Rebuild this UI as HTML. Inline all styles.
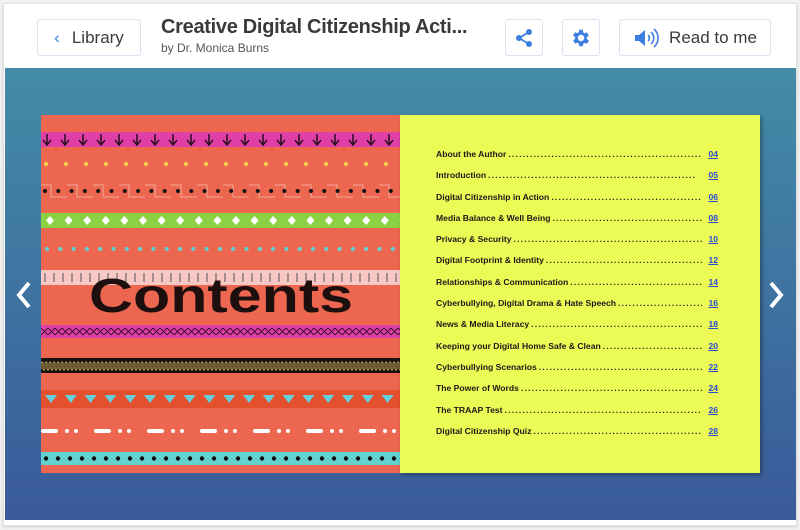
<!DOCTYPE html>
<html><head><meta charset="utf-8"><style>
*{margin:0;padding:0;box-sizing:border-box}
body{width:800px;height:530px;background:#f2f2f2;font-family:"Liberation Sans",sans-serif;position:relative;overflow:hidden}
.card{position:absolute;left:3px;top:3px;width:794px;height:523px;background:#fff;border:1px solid #e2e2e2;box-shadow:0 1px 3px rgba(0,0,0,.15)}
.btn{position:absolute;top:19px;height:37px;border:1px solid #d9e3ef;border-radius:3px;background:#fff;display:flex;align-items:center;justify-content:center;color:#3a3a3a;font-size:17px}
.title{position:absolute;left:161px;top:16px;font-size:20px;font-weight:bold;color:#3a3a3a;letter-spacing:-0.3px}
.sub{position:absolute;left:161px;top:41px;font-size:12px;color:#555}
.stage{position:absolute;left:5px;top:68px;width:791px;height:452px;background:linear-gradient(#438ca7,#3a5a9a)}
.lp{position:absolute;left:41px;top:115px;width:359px;height:358px;background:#ed6750}
.rp{position:absolute;left:400px;top:115px;width:360px;height:358px;background:#ebfa54;box-shadow:2px 2px 4px rgba(0,0,0,.35)}
.toc{position:absolute;left:36px;top:34px;width:282px;font-size:8.6px;font-weight:bold;color:#1a1a1a}
.toc div{display:flex;height:21.3px;align-items:flex-start;white-space:nowrap;overflow:hidden}
.toc span.d{flex:1;overflow:hidden;letter-spacing:1.2px;padding-left:2px}
.toc u{color:#2a4ad8;margin-left:4px;width:12px;display:inline-block;text-align:right;flex:none}
.arr{position:absolute}
</style></head><body>
<div class="card"></div>
<div class="btn" style="left:37px;width:104px"><span style="color:#3d7fe0;font-size:17px;margin-right:12px">&#8249;</span>Library</div>
<div class="title">Creative Digital Citizenship Acti...</div>
<div class="sub">by Dr. Monica Burns</div>
<div class="btn" style="left:505px;width:38px"><svg width="18" height="20" viewBox="0 0 18 20"><circle cx="14" cy="4" r="3" fill="#3d7fe0"/><circle cx="4" cy="10" r="3" fill="#3d7fe0"/><circle cx="14" cy="16" r="3" fill="#3d7fe0"/><path d="M14 4L4 10L14 16" stroke="#3d7fe0" stroke-width="1.8" fill="none"/></svg></div>
<div class="btn" style="left:562px;width:38px"><svg width="22" height="22" viewBox="0 0 24 24"><path fill="#3d7fe0" fill-rule="evenodd" d="M19.4 13a7.5 7.5 0 000-2l2.1-1.6-2-3.5-2.5 1a7 7 0 00-1.7-1L15 3h-4l-.4 2.7a7 7 0 00-1.7 1l-2.5-1-2 3.5L6.6 11a7.5 7.5 0 000 2l-2.1 1.6 2 3.5 2.5-1a7 7 0 001.7 1L11 21h4l.4-2.7a7 7 0 001.7-1l2.5 1 2-3.5zM13 15.5a3.5 3.5 0 110-7 3.5 3.5 0 010 7z" transform="translate(-1 0)"/></svg></div>
<div class="btn" style="left:619px;width:152px"><svg width="26" height="22" viewBox="0 0 26 22" style="margin-right:10px"><path d="M2 8h4l6-5v16l-6-5H2z" fill="#3d7fe0"/><path d="M15 8a4 4 0 010 6M18 5a8 8 0 010 12M21 2a12 12 0 010 18" stroke="#3d7fe0" stroke-width="1.6" fill="none"/></svg>Read to me</div>
<div class="stage"></div>
<div class="lp"><svg width="359" height="358" viewBox="0 0 359 358">
<defs>
<pattern id="ar" width="18" height="15" patternUnits="userSpaceOnUse"><path d="M6 2v11M2 8l4 5 4-5" stroke="#2a1020" stroke-width="1.5" fill="none"/></pattern>
<pattern id="yd" width="20" height="6" patternUnits="userSpaceOnUse"><circle cx="5" cy="3" r="2" fill="#f7d64a"/></pattern>
<pattern id="bd" width="13.3" height="6" patternUnits="userSpaceOnUse"><circle cx="4" cy="3" r="2" fill="#111"/></pattern>
<pattern id="zz" width="26" height="14" patternUnits="userSpaceOnUse"><path d="M0 1h10v12h16" stroke="#f29a8a" stroke-width="1.3" fill="none"/></pattern>
<pattern id="dm" width="18.6" height="15" patternUnits="userSpaceOnUse"><path d="M9 3l4 4.5-4 4.5-4-4.5z" fill="#fff"/></pattern>
<pattern id="cd" width="13.3" height="6" patternUnits="userSpaceOnUse"><circle cx="6" cy="3" r="2" fill="#5fd4d8"/></pattern>
<pattern id="tk" width="9" height="15" patternUnits="userSpaceOnUse"><path d="M4 3v9" stroke="#555" stroke-width="1"/></pattern>
<pattern id="xx" width="7" height="13" patternUnits="userSpaceOnUse"><path d="M0 3l7 7M7 3l-7 7" stroke="#3a1030" stroke-width="1"/></pattern>
<pattern id="wv" width="4" height="15" patternUnits="userSpaceOnUse"><path d="M0 11V5a1 1 0 012 0v6a1 1 0 002 0V5" stroke="#e8d060" stroke-width=".8" fill="none"/></pattern>
<pattern id="tr" width="19.8" height="18" patternUnits="userSpaceOnUse"><path d="M4 5h12l-6 8z" fill="#63d0dc"/></pattern>
<pattern id="wd" width="53" height="6" patternUnits="userSpaceOnUse"><rect x="0" y="1" width="17" height="4" rx="2" fill="#fff"/><circle cx="26" cy="3" r="2" fill="#fff"/><circle cx="35" cy="3" r="2" fill="#fff"/></pattern>
<pattern id="kd" width="12" height="13" patternUnits="userSpaceOnUse"><circle cx="5" cy="6.5" r="2.2" fill="#111"/></pattern>
</defs>
<g transform="translate(0,17)"><rect width="359" height="15" fill="#e13fa8"/><rect width="359" height="15" fill="url(#ar)"/></g>
<g transform="translate(0,46)"><rect width="359" height="6" fill="url(#yd)"/></g>
<g transform="translate(0,69)"><rect width="359" height="14" fill="url(#zz)"/></g>
<g transform="translate(0,73)"><rect width="359" height="6" fill="url(#bd)"/></g>
<g transform="translate(0,98)"><rect width="359" height="15" fill="#8bd143"/><rect width="359" height="15" fill="url(#dm)"/></g>
<g transform="translate(0,131)"><rect width="359" height="6" fill="url(#cd)"/></g>
<g transform="translate(0,155)"><rect width="359" height="15" fill="#f8c8c4"/><rect width="359" height="15" fill="url(#tk)"/></g>
<text x="48" y="197" font-family="Liberation Sans,sans-serif" font-weight="bold" font-size="48" fill="#1e0f0f" textLength="264" lengthAdjust="spacingAndGlyphs">Contents</text>
<g transform="translate(0,210)"><rect width="359" height="13" fill="#e13fa8"/><rect width="359" height="13" fill="url(#xx)"/></g>
<g transform="translate(0,243)"><rect width="359" height="15" fill="#1a1212"/><rect width="359" height="15" fill="url(#wv)"/></g>
<g transform="translate(0,275)"><rect width="359" height="18" fill="#e4502e"/><rect width="359" height="18" fill="url(#tr)"/></g>
<g transform="translate(0,313)"><rect width="359" height="6" fill="url(#wd)"/></g>
<g transform="translate(0,337)"><rect width="359" height="13" fill="#62d2d0"/><rect width="359" height="13" fill="url(#kd)"/></g>
</svg></div>
<div class="rp"><div class="toc">
<div>About the Author<span class="d">..........................................................</span><u>04</u></div>
<div>Introduction<span class="d">..........................................................</span><u>05</u></div>
<div>Digital Citizenship in Action<span class="d">..........................................................</span><u>06</u></div>
<div>Media Balance &amp; Well Being<span class="d">..........................................................</span><u>08</u></div>
<div>Privacy &amp; Security<span class="d">..........................................................</span><u>10</u></div>
<div>Digital Footprint &amp; Identity<span class="d">..........................................................</span><u>12</u></div>
<div>Relationships &amp; Communication<span class="d">..........................................................</span><u>14</u></div>
<div>Cyberbullying, Digital Drama &amp; Hate Speech<span class="d">..........................................................</span><u>16</u></div>
<div>News &amp; Media Literacy<span class="d">..........................................................</span><u>18</u></div>
<div>Keeping your Digital Home Safe &amp; Clean<span class="d">..........................................................</span><u>20</u></div>
<div>Cyberbullying Scenarios<span class="d">..........................................................</span><u>22</u></div>
<div>The Power of Words<span class="d">..........................................................</span><u>24</u></div>
<div>The TRAAP Test<span class="d">..........................................................</span><u>26</u></div>
<div>Digital Citizenship Quiz<span class="d">..........................................................</span><u>28</u></div>
</div></div>
<svg class="arr" style="left:14px;top:280px" width="20" height="30" viewBox="0 0 20 30"><path d="M15 3L5 15l10 12" stroke="#fff" stroke-width="4" fill="none"/></svg>
<svg class="arr" style="left:766px;top:280px" width="20" height="30" viewBox="0 0 20 30"><path d="M5 3l10 12L5 27" stroke="#fff" stroke-width="4" fill="none"/></svg>
</body></html>
